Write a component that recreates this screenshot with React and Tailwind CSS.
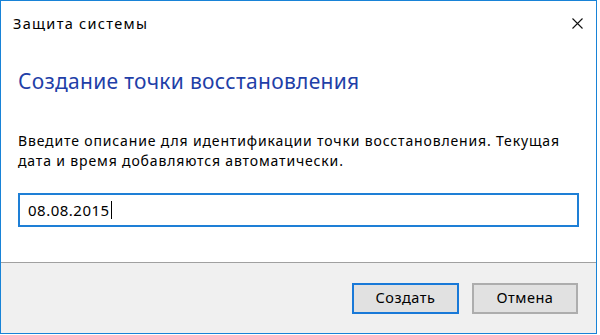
import React from 'react';

const font = { fontFamily: '"Noto Sans", "Open Sans", sans-serif' };

const CloseIcon = () => (
    <svg width="11" height="11" viewBox="0 0 11 11" className="block">
        <path d="M0.5 0.5 L10.5 10.5 M10.5 0.5 L0.5 10.5" stroke="#111" strokeWidth="1.1" fill="none" />
    </svg>
);

const App = () => {
    return (
        <div className="w-[600px] h-[335px] bg-white" style={font}>
            <div className="w-[597px] h-[334px] border border-[#1883d7] bg-white flex flex-col">
                {/* заголовок окна */}
                <div className="h-[44px] flex items-center justify-between pl-[12px] pr-[13px]">
                    <span className="text-[14.5px] tracking-[1.3px] text-black leading-none">Защита системы</span>
                    <CloseIcon />
                </div>

                <div className="px-[17px] pt-[22px]">
                    <h1 className="text-[21px] tracking-[0.3px] leading-[28px] text-[#1f3fa8]">Создание точки восстановления</h1>
                    <p className="mt-[36px] text-[14px] tracking-[0.85px] leading-[20px] text-black">
                        Введите описание для идентификации точки восстановления. Текущая
                        <br />
                        дата и время добавляются автоматически.
                    </p>
                    <div className="mt-[22px] h-[34px] border-2 border-[#1e7fd6] flex items-center pl-[8px]">
                        <span className="text-[15px] tracking-[0.5px] text-black">08.08.2015</span>
                        <span className="w-px h-[18px] bg-black ml-[1px]"></span>
                    </div>
                </div>

                <div className="mt-auto h-[71px] border-t border-[#a0a0a0] bg-[#f0f0f0] flex items-center justify-end gap-[13px] pr-[18px]">
                    <button className="w-[107px] h-[31px] border-2 border-[#1979d8] bg-[#e1e1e1] text-[14.5px] tracking-[0.5px] text-black">
                        Создать
                    </button>
                    <button className="w-[106px] h-[31px] border-2 border-[#adadad] bg-[#e1e1e1] text-[14.5px] tracking-[0.5px] text-black">
                        Отмена
                    </button>
                </div>
            </div>
        </div>
    );
};

export default App;
